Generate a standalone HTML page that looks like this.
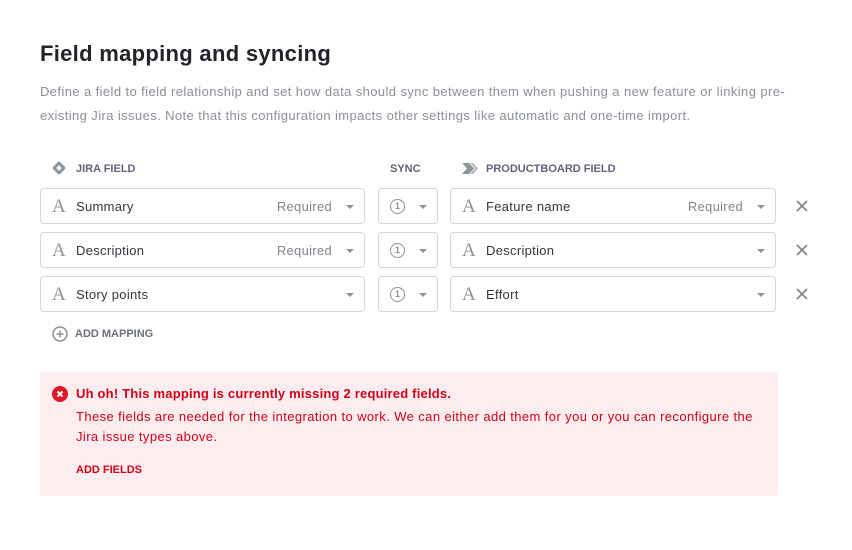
<!DOCTYPE html>
<html><head><style>
body{margin:0;background:#fff;font-family:"Liberation Sans",sans-serif;width:852px;height:550px;position:relative;overflow:hidden}
.a{position:absolute}
h1{position:absolute;left:40px;top:41px;margin:0;font-size:22px;font-weight:bold;color:#212329;letter-spacing:0.3px}
.desc{left:40px;top:80px;width:800px;font-size:13px;line-height:24px;color:#8a8f99;white-space:nowrap;letter-spacing:0.4px}
.hd{font-size:11px;font-weight:bold;color:#5f6570;top:162px}
.box{position:absolute;height:36px;border:1px solid #d3d6dc;border-radius:4px;box-sizing:border-box;background:#fff}
.box .A{position:absolute;left:11px;top:7px;font-family:"Liberation Serif",serif;font-size:19px;color:#8d929b}
.box .t{position:absolute;left:35px;top:10px;font-size:13px;color:#33373d;letter-spacing:0.3px}
.box .r{position:absolute;right:32px;top:10px;font-size:13px;color:#80858e;letter-spacing:0.3px}
.box .c{position:absolute;right:10px;top:16px;width:0;height:0;border-left:4px solid transparent;border-right:4px solid transparent;border-top:4px solid #8d929b}
.s1{position:absolute;left:11px;top:10px;width:15px;height:15px;border:1.5px solid #8d929b;border-radius:50%;box-sizing:border-box;font-size:9px;font-weight:bold;color:#8d929b;text-align:center;line-height:12px}
.x{position:absolute;left:796px}
</style></head><body>
<h1>Field mapping and syncing</h1>
<div class="a desc">Define a field to field relationship and set how data should sync between them when pushing a new feature or linking pre-<br>existing Jira issues. Note that this configuration impacts other settings like automatic and one-time import.</div>
<div class="a" style="left:54px;top:163px;width:10px;height:10px;background:#8d929b;transform:rotate(45deg);border-radius:2px"></div>
<div class="a" style="left:57px;top:166px;width:4px;height:4px;background:#fff;transform:rotate(45deg)"></div>
<div class="a hd" style="left:76px;top:163px">JIRA FIELD</div>
<div class="a hd" style="left:390px;top:163px">SYNC</div>
<svg class="a" style="left:462px;top:163px" width="16" height="11"><path d="M0 0h7l5 5.5-5 5.5H0l5-5.5z" fill="#8d929b"/><path d="M8 0h3l5 5.5-5 5.5H8l5-5.5z" fill="#b5b9c0"/></svg>
<div class="a hd" style="left:486px;top:163px">PRODUCTBOARD FIELD</div>

<div class="box" style="left:40px;top:188px;width:325px"><span class="A">A</span><span class="t">Summary</span><span class="r">Required</span><span class="c"></span></div>
<div class="box" style="left:378px;top:188px;width:60px"><span class="s1">1</span><span class="c"></span></div>
<div class="box" style="left:450px;top:188px;width:326px"><span class="A">A</span><span class="t">Feature name</span><span class="r">Required</span><span class="c"></span></div>
<svg class="x" style="top:200px" width="12" height="12"><path d="M1 1l10 10M11 1L1 11" stroke="#80858e" stroke-width="1.7"/></svg>

<div class="box" style="left:40px;top:232px;width:325px"><span class="A">A</span><span class="t">Description</span><span class="r">Required</span><span class="c"></span></div>
<div class="box" style="left:378px;top:232px;width:60px"><span class="s1">1</span><span class="c"></span></div>
<div class="box" style="left:450px;top:232px;width:326px"><span class="A">A</span><span class="t">Description</span><span class="c"></span></div>
<svg class="x" style="top:244px" width="12" height="12"><path d="M1 1l10 10M11 1L1 11" stroke="#80858e" stroke-width="1.7"/></svg>

<div class="box" style="left:40px;top:276px;width:325px"><span class="A">A</span><span class="t">Story points</span><span class="c"></span></div>
<div class="box" style="left:378px;top:276px;width:60px"><span class="s1">1</span><span class="c"></span></div>
<div class="box" style="left:450px;top:276px;width:326px"><span class="A">A</span><span class="t">Effort</span><span class="c"></span></div>
<svg class="x" style="top:288px" width="12" height="12"><path d="M1 1l10 10M11 1L1 11" stroke="#80858e" stroke-width="1.7"/></svg>

<svg class="a" style="left:52px;top:326px" width="16" height="16"><circle cx="8" cy="8" r="7" fill="none" stroke="#8d929b" stroke-width="1.5"/><path d="M8 4.5v7M4.5 8h7" stroke="#8d929b" stroke-width="1.5"/></svg>
<div class="a" style="left:75px;top:328px;font-size:11px;font-weight:bold;color:#6b7079">ADD MAPPING</div>

<div class="a" style="left:40px;top:372px;width:738px;height:124px;background:#fdedef;border-radius:3px"></div>
<svg class="a" style="left:52px;top:386px" width="16" height="16"><circle cx="8" cy="8" r="8" fill="#e0162b"/><path d="M5.5 5.5l5 5M10.5 5.5l-5 5" stroke="#fff" stroke-width="2"/></svg>
<div class="a" style="left:76px;top:386px;font-size:13px;font-weight:bold;color:#d0021b;letter-spacing:0.2px">Uh oh! This mapping is currently missing 2 required fields.</div>
<div class="a" style="left:76px;top:407px;width:700px;font-size:13px;line-height:20px;color:#d0021b;white-space:nowrap;letter-spacing:0.4px">These fields are needed for the integration to work. We can either add them for you or you can reconfigure the<br>Jira issue types above.</div>
<div class="a" style="left:76px;top:464px;font-size:11px;font-weight:bold;color:#d0021b">ADD FIELDS</div>
</body></html>
